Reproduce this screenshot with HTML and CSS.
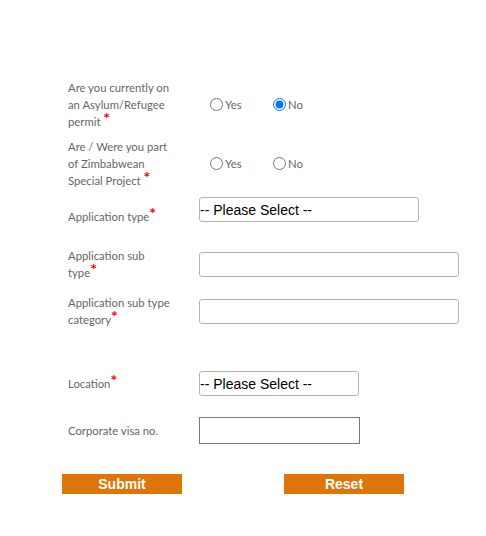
FILE: index.html
```html
<!DOCTYPE html>
<html>
<head>
<meta charset="utf-8">
<link rel="stylesheet" href="styles.css">
</head>
<body>
<form class="form">
  <div class="row row-radio">
    <div class="label">Are you currently on an Asylum/Refugee permit <span class="req">*</span></div>
    <div class="control radios">
      <label class="opt"><input type="radio" name="asylum">Yes</label>
      <label class="opt"><input type="radio" name="asylum" checked>No</label>
    </div>
  </div>
  <div class="row row-radio row-2">
    <div class="label">Are / Were you part of Zimbabwean Special Project <span class="req">*</span></div>
    <div class="control radios">
      <label class="opt"><input type="radio" name="zim">Yes</label>
      <label class="opt"><input type="radio" name="zim">No</label>
    </div>
  </div>
  <div class="row row-apptype">
    <div class="label label-low">Application type<span class="req">*</span></div>
    <div class="control"><select class="select select-wide"><option>-- Please Select --</option></select></div>
  </div>
  <div class="row row-subtype">
    <div class="label">Application sub type<span class="req">*</span></div>
    <div class="control"><input class="text text-wide" type="text"></div>
  </div>
  <div class="row row-category">
    <div class="label">Application sub type category<span class="req">*</span></div>
    <div class="control"><input class="text text-wide" type="text"></div>
  </div>
  <div class="row row-location">
    <div class="label">Location<span class="req">*</span></div>
    <div class="control"><select class="select select-short"><option>-- Please Select --</option></select></div>
  </div>
  <div class="row row-visa">
    <div class="label">Corporate visa no.</div>
    <div class="control"><input class="plain" type="text"></div>
  </div>
  <div class="buttons">
    <button type="button" class="btn">Submit</button>
    <button type="button" class="btn">Reset</button>
  </div>
</form>
</body>
</html>
```
FILE: styles.css
```css
html, body {
  margin: 0;
  padding: 0;
  background: #fff;
}
.form {
  padding: 79px 0 0 68px;
  font-family: Lato, "Open Sans", sans-serif;
  font-size: 11.3px;
  color: #666;
}
.row {
  display: flex;
  align-items: center;
}
.label {
  width: 104px;
  margin-right: 27px;
  line-height: 17px;
  flex: none;
}
.req {
  color: #f00;
  font-size: 16px;
  font-weight: bold;
  line-height: 0;
  vertical-align: 2px;
}
.radios {
  display: flex;
  align-items: center;
  padding-left: 6px;
}
.opt {
  display: flex;
  align-items: center;
  width: 63px;
}
.opt input {
  margin: 0 2px 0 5px;
  width: 13px;
  height: 13px;
}
.row-2 { margin-top: 8px; }
.row-apptype { margin-top: 8px; align-items: flex-start; }
.label-low { padding-top: 11px; }
.row-subtype { margin-top: 22px; }
.row-category { margin-top: 13px; }
.row-location { margin-top: 43px; }
.row-visa { margin-top: 21px; }
.select, .text {
  box-sizing: border-box;
  height: 25px;
  border: 1px solid #b4b4b4;
  border-radius: 3px;
  background: #fff;
  margin: 0;
}
.select {
  appearance: none;
  -webkit-appearance: none;
  padding: 0;
  font-family: "Liberation Sans", Arial, sans-serif;
  font-size: 14px;
  color: #000;
}
.select-wide { width: 220px; }
.select-short { width: 160px; }
.text-wide { width: 260px; }
.plain {
  box-sizing: border-box;
  width: 161px;
  height: 27px;
  margin: 0;
  border: 1px solid #767676;
  border-radius: 0;
}
.buttons {
  display: flex;
  gap: 102px;
  margin: 30px 0 0 -6px;
}
.btn {
  width: 120px;
  height: 20px;
  padding: 0;
  border: none;
  background: #dd7508;
  color: #fff;
  font-family: "Liberation Sans", Arial, sans-serif;
  font-size: 14px;
  font-weight: bold;
}
```
